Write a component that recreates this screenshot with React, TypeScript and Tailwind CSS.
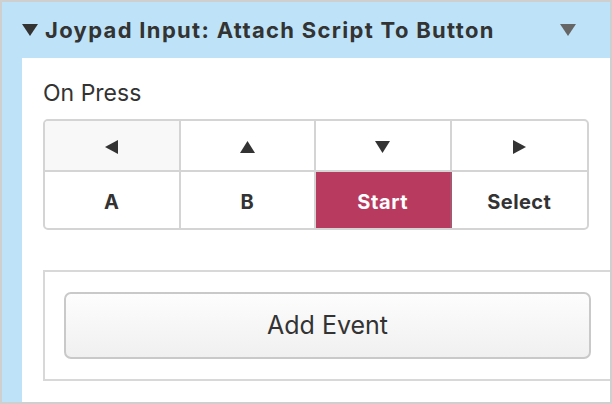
import React from "react";

const Tri = ({ dir, className }: { dir: "l" | "u" | "d" | "r"; className?: string }) => {
  if (dir === "l" || dir === "r") {
    const pts = dir === "l" ? "13,0 13,14 0,7" : "0,0 0,14 13,7";
    return (
      <svg width="13" height="14" viewBox="0 0 13 14" className={className}>
        <polygon points={pts} fill="currentColor" />
      </svg>
    );
  }
  const pts = dir === "u" ? "0,12 15,12 7.5,0" : "0,0 15,0 7.5,12";
  return (
    <svg width="15" height="12" viewBox="0 0 15 12" className={className}>
      <polygon points={pts} fill="currentColor" />
    </svg>
  );
};

export default function App() {
  const font = { fontFamily: "Inter, 'Liberation Sans', sans-serif" };
  return (
    <div
      className="w-[612px] h-[404px] border-2 border-[#cfcfcf] bg-[#bee3f8] flex flex-col overflow-hidden text-[#333]"
      style={font}
    >
      <div className="h-[56px] shrink-0 flex items-center pl-[20px] pr-[34px]">
        <svg width="16" height="12" viewBox="0 0 16 12" className="text-[#333]">
          <polygon points="0,0 16,0 8,12" fill="currentColor" />
        </svg>
        <div className="ml-[7px] text-[22px] tracking-[0.06em] font-bold leading-none flex-1 whitespace-nowrap">
          Joypad Input: Attach Script To Button
        </div>
        <svg width="16" height="12" viewBox="0 0 16 12" className="text-[#666]">
          <polygon points="0,0 16,0 8,12" fill="currentColor" />
        </svg>
      </div>
      <div className="flex-1 ml-[20px] bg-white pl-[21px] pt-[20px] pb-[21px] flex flex-col">
        <div className="text-[23px] leading-[30px] text-[#333]">On Press</div>
        <div className="mt-[11px] mr-[21px] grid grid-cols-4 border-2 border-[#d4d4d4] rounded-[5px] overflow-hidden">
          <div className="h-[51px] pt-[3px] flex items-center justify-center bg-[#f8f8f8] border-r-2 border-b-2 border-[#d4d4d4]">
            <Tri dir="l" className="text-[#333]" />
          </div>
          <div className="h-[51px] pt-[3px] flex items-center justify-center border-r-2 border-b-2 border-[#d4d4d4]">
            <Tri dir="u" className="text-[#333]" />
          </div>
          <div className="h-[51px] pt-[3px] flex items-center justify-center border-r-2 border-b-2 border-[#d4d4d4]">
            <Tri dir="d" className="text-[#333]" />
          </div>
          <div className="h-[51px] pt-[3px] flex items-center justify-center border-b-2 border-[#d4d4d4]">
            <Tri dir="r" className="text-[#333]" />
          </div>
          <div className="h-[56px] pt-[3px] flex items-center justify-center border-r-2 border-[#d4d4d4] text-[20px] tracking-[0.02em] font-bold">A</div>
          <div className="h-[56px] pt-[3px] flex items-center justify-center border-r-2 border-[#d4d4d4] text-[20px] tracking-[0.02em] font-bold">B</div>
          <div className="h-[56px] pt-[3px] flex items-center justify-center border-r-2 border-[#a8566f] bg-[#b83b5f] text-white text-[20px] tracking-[0.03em] font-bold">
            Start
          </div>
          <div className="h-[56px] pt-[3px] flex items-center justify-center text-[20px] tracking-[0.02em] font-bold">Select</div>
        </div>
        <div className="mt-[40px] border-2 border-r-0 border-[#d8d8d8] px-[19px] pt-[20px] pb-[20px]">
          <div className="h-[67px] rounded-[7px] border-2 border-[#c9c9c9] bg-gradient-to-b from-[#fdfdfd] to-[#f0f0f0] flex items-center justify-center text-[25px] text-[#333]">
            Add Event
          </div>
        </div>
      </div>
    </div>
  );
}
